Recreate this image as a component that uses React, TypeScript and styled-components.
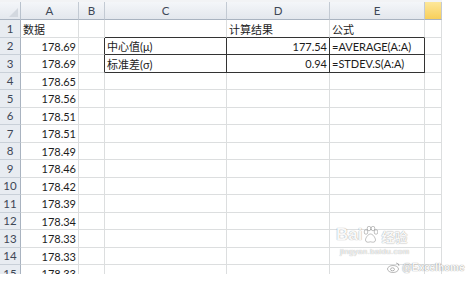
import React from 'react';
import styled, { createGlobalStyle, css } from 'styled-components';

const Global = createGlobalStyle`
  html, body { margin: 0; padding: 0; background: #fff; }
  body { font-family: Lato, "Noto Sans CJK SC", sans-serif; }
`;

const Page = styled.div`
  position: relative;
  width: 474px;
  height: 281px;
  overflow: hidden;
  background: #fff;
`;

const Sheet = styled.div`
  width: 442px;
  height: 272px;
  border-top: 2px solid #f2f3f5;
  overflow: hidden;
  display: grid;
  grid-template-columns: 21px 58px 26px 122px 103px 95px 17px;
  grid-template-rows: 18px repeat(15, 17.5px);
  font-family: Lato, "Noto Sans CJK SC", sans-serif;
  font-size: 11px;
  color: #1c1c1c;
`;

const Corner = styled.div`
  position: relative;
  background: linear-gradient(#f4f6f9, #e4e8ee);
  border-right: 1px solid #b9c2cd;
  border-bottom: 1px solid #a9b3c0;
  &::after {
    content: '';
    position: absolute;
    right: 2px;
    bottom: 2px;
    width: 0;
    height: 0;
    border-left: 9px solid transparent;
    border-bottom: 9px solid #d3d8df;
  }
`;

const ColHead = styled.div<{ $active?: boolean }>`
  display: flex;
  align-items: center;
  justify-content: center;
  background: ${(p) => (p.$active ? 'linear-gradient(#fde79a, #f8cf5a)' : 'linear-gradient(#f4f6f9, #e3e7ed)')};
  border-right: 1px solid #c3cad3;
  border-bottom: 1px solid #a9b3c0;
  color: #3e4756;
  font-size: 11.5px;
`;

const RowHead = styled.div`
  display: flex;
  align-items: center;
  justify-content: center;
  background: #e8ecf1;
  border-right: 1px solid #a9b3c0;
  border-bottom: 1px solid #c9d0d8;
  color: #3e4756;
  font-size: 11.5px;
`;

const Cell = styled.div<{ $align?: 'left' | 'right'; $dr?: boolean; $db?: boolean }>`
  display: flex;
  align-items: center;
  justify-content: ${(p) => (p.$align === 'right' ? 'flex-end' : 'flex-start')};
  padding: 1px 2px 0 2px;
  white-space: nowrap;
  border-right: 1px solid #dcdedf;
  border-bottom: 1px solid #dcdedf;
  ${(p) => p.$dr && css`border-right: 1px solid #333;`}
  ${(p) => p.$db && css`border-bottom: 1px solid #333;`}
`;

const Watermark = styled.div`
  position: absolute;
  left: 336px;
  top: 226px;
  color: rgba(255, 255, 255, 0.95);
  text-shadow: 0 0 1px rgba(0, 0, 0, 0.3), 0 0 1px rgba(0, 0, 0, 0.2);
  pointer-events: none;
`;

const BaiduLine = styled.div`
  display: flex;
  align-items: flex-end;
  gap: 1px;
  font-family: "Liberation Sans", sans-serif;
  font-weight: bold;
  font-size: 17px;
  line-height: 1;
`;

const Jingyan = styled.span`
  font-family: "Noto Sans CJK SC", sans-serif;
  font-size: 13px;
  margin-left: 2px;
`;

const Url = styled.div`
  font-family: "Liberation Sans", sans-serif;
  font-size: 8px;
  margin-top: 4px;
  margin-left: 4px;
  letter-spacing: 0.3px;
`;

const Weibo = styled.div`
  position: absolute;
  left: 387px;
  top: 262px;
  display: flex;
  align-items: center;
  gap: 2px;
  color: rgba(255, 255, 255, 0.95);
  text-shadow: 0 0 1px rgba(0, 0, 0, 0.35), 0 0 1px rgba(0, 0, 0, 0.25);
  font-family: "Liberation Sans", sans-serif;
  font-weight: bold;
  font-size: 10px;
`;

const cols = ['A', 'B', 'C', 'D', 'E', ''];
const values = [
  '178.69', '178.69', '178.65', '178.56', '178.51', '178.51', '178.49',
  '178.46', '178.42', '178.39', '178.34', '178.33', '178.33', '178.33',
];

type CellDef = { text?: string; align?: 'left' | 'right'; dr?: boolean; db?: boolean };

function rowCells(r: number): CellDef[] {
  const a: CellDef = r === 1 ? { text: '数据' } : { text: values[r - 2], align: 'right' };
  const b: CellDef = { dr: r === 2 || r === 3 };
  const boxed = r === 2 || r === 3;
  const top = r === 1;
  let c: CellDef = { dr: boxed, db: boxed || top };
  let d: CellDef = { dr: boxed, db: boxed || top };
  let e: CellDef = { dr: boxed, db: boxed || top };
  if (r === 1) {
    d = { ...d, text: '计算结果' };
    e = { ...e, text: '公式' };
  }
  if (r === 2) {
    c = { ...c, text: '中心值(μ)' };
    d = { ...d, text: '177.54', align: 'right' };
    e = { ...e, text: '=AVERAGE(A:A)' };
  }
  if (r === 3) {
    c = { ...c, text: '标准差(σ)' };
    d = { ...d, text: '0.94', align: 'right' };
    e = { ...e, text: '=STDEV.S(A:A)' };
  }
  return [a, b, c, d, e, {}];
}

export default function App() {
  const rows = Array.from({ length: 15 }, (_, i) => i + 1);
  return (
    <Page>
      <Global />
      <Sheet>
        <Corner />
        {cols.map((c, i) => (
          <ColHead key={i} $active={i === 5}>{c}</ColHead>
        ))}
        {rows.map((r) => (
          <React.Fragment key={r}>
            <RowHead>{r}</RowHead>
            {rowCells(r).map((cell, j) => (
              <Cell key={j} $align={cell.align} $dr={cell.dr} $db={cell.db}>
                {cell.text}
              </Cell>
            ))}
          </React.Fragment>
        ))}
      </Sheet>
      <Watermark>
        <BaiduLine>
          <span>Bai</span>
          <svg width="15" height="17" viewBox="0 0 15 17">
            <g fill="rgba(255,255,255,0.95)" stroke="rgba(0,0,0,0.3)" strokeWidth="0.8">
              <ellipse cx="3" cy="6" rx="1.8" ry="2.3" />
              <ellipse cx="6" cy="2.5" rx="1.8" ry="2.3" />
              <ellipse cx="10" cy="2.5" rx="1.8" ry="2.3" />
              <ellipse cx="13" cy="6" rx="1.8" ry="2.3" />
              <path d="M7.5 8 C5 8 2.5 12 2.5 14 C2.5 16.5 5 16.5 7.5 15.8 C10 16.5 12.5 16.5 12.5 14 C12.5 12 10 8 7.5 8 Z" />
            </g>
          </svg>
          <Jingyan>经验</Jingyan>
        </BaiduLine>
        <Url>jingyan.baidu.com</Url>
      </Watermark>
      <Weibo>
        <svg width="13" height="11" viewBox="0 0 13 11">
          <g fill="rgba(255,255,255,0.95)" stroke="rgba(0,0,0,0.35)" strokeWidth="0.8">
            <ellipse cx="6" cy="7" rx="5.5" ry="3.5" />
            <ellipse cx="5.5" cy="7.3" rx="2" ry="1.5" />
            <path d="M9 1 A3 3 0 0 1 12 4" fill="none" />
          </g>
        </svg>
        <span>@Excelhome</span>
      </Weibo>
    </Page>
  );
}
